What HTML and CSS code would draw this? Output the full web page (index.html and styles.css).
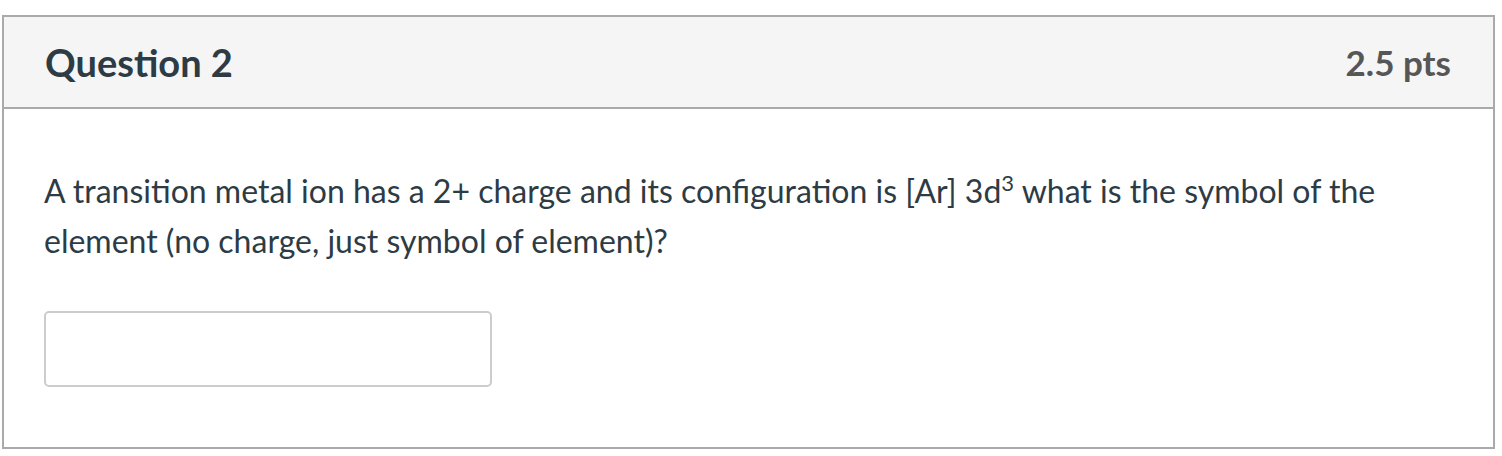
FILE: index.html
```html
<!DOCTYPE html>
<html>
<head>
<meta charset="utf-8">
<link rel="stylesheet" href="styles.css">
</head>
<body>
<div class="question">
  <div class="header">
    <h2 class="title">Question 2</h2>
    <div class="points">2.5 pts</div>
  </div>
  <div class="content">
    <p class="text">A transition metal ion has a 2+ charge and its configuration is [Ar] 3d<sup>3</sup> what is the symbol of the element (no charge, just symbol of element)?</p>
    <div class="answer"><input class="answer-input" type="text" aria-label="Answer"></div>
  </div>
</div>
</body>
</html>
```
FILE: styles.css
```css
html, body {
  margin: 0;
  padding: 0;
  background: #ffffff;
}
body {
  font-family: Lato, "Liberation Sans", sans-serif;
  color: #2d3b45;
}
.question {
  margin: 15px 0 0 2px;
  width: 1493px;
  box-sizing: border-box;
  border: 2px solid #aaaaaa;
}
.header {
  display: flex;
  align-items: center;
  justify-content: space-between;
  height: 92px;
  box-sizing: border-box;
  padding: 0 42px 0 41px;
  background: #f5f5f5;
  border-bottom: 2px solid #aaaaaa;
}
.title {
  margin: 0;
  font-size: 38px;
  font-weight: 700;
  color: #2d3b45;
}
.points {
  font-size: 35px;
  font-weight: 700;
  color: #565656;
}
.content {
  padding: 57px 40px 60px 40px;
}
.text {
  margin: 0;
  font-size: 32px;
  line-height: 50px;
  width: 1380px;
}
.text sup {
  font-size: 22px;
  line-height: 0;
}
.answer {
  margin-top: 45px;
}
.answer-input {
  display: block;
  width: 448px;
  height: 76px;
  box-sizing: border-box;
  border: 2px solid #cccccc;
  border-radius: 5px;
  background: #fff;
  margin: 0;
}
```
